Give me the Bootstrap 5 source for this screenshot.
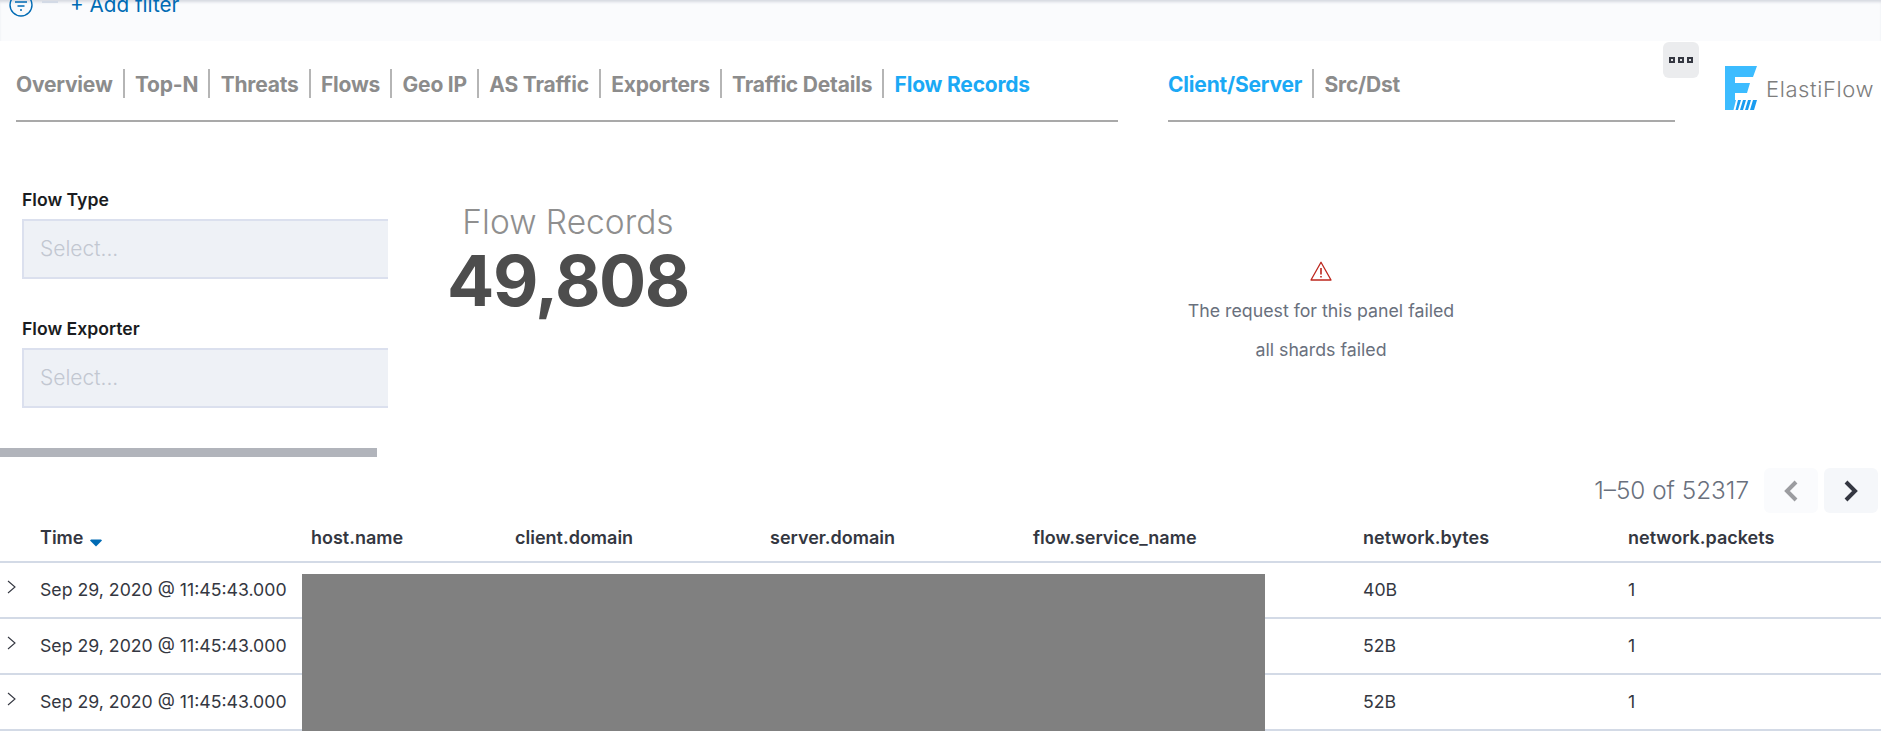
<!DOCTYPE html>
<html lang="en"><head><meta charset="utf-8"><title>Flow Records</title>
<link rel="stylesheet" href="https://cdn.jsdelivr.net/npm/bootstrap@5.3.0/dist/css/bootstrap.min.css">
<style>
body{font-family:Inter,"Liberation Sans",sans-serif;background:#fff;color:#343741;overflow:hidden;height:749px}
.filterbar{height:41px;background:#fafbfd;overflow:hidden;box-shadow:inset 0 3px 3px -1px #d5d8e0;padding-left:9px}
.filter-inner{margin-top:-7px;height:24px;gap:9px}
.filter-dash{width:16px;height:2px;background:#d3dae6;margin-top:-6px}
.filter-add{color:#006bb4;font-size:20.7px;line-height:24px;margin-left:3px}
.tabs-row{height:113px;position:relative}
.tab-group{padding-top:28px;height:81px;border-bottom:2px solid #a9a9a9}
.tab-group-a{margin-left:16px;width:1102px}
.tab-group-b{margin-left:50px;width:507px}
.tab-item{font-size:21px;font-weight:700;height:29px;line-height:31px;color:#8c8c8c;text-decoration:none;padding:0 10.2px;border-right:2px solid #b5b5b5;white-space:nowrap;letter-spacing:-.2px}
.tab-item:first-child{padding-left:0}
.tab-item:last-child{border-right:0}
.tab-item.is-on{color:#1ba9f5}
.more-btn{position:absolute;left:1663px;top:1px;width:36px;height:36px;background:#ebecee;border:0;border-radius:6px;padding:0;gap:3px}
.more-btn span{width:6px;height:6px;border:2px solid #343741;background:#e3e3e6;display:block}
.logo-wrap{position:absolute;left:1725px;top:25px;gap:9px}
.logo-text{font-size:22px;font-weight:300;color:#7d7d7d;letter-spacing:.6px;margin-top:7px}
.panels{height:294px}
.controls{width:388px;padding:36px 0 0 22px;flex:none}
.ctl-label{font-size:17.6px;font-weight:600;line-height:20px;color:#1a1c21;margin-bottom:9px}
.ctl-input{height:60px;background:#eef1f6;border:2px solid #dbe0ee;border-right:0;border-radius:0;font-size:21px;font-weight:300;color:#c2c7d1;padding:0 0 0 16px;display:flex;align-items:center;margin-bottom:40px}
.metric{width:300px;margin-left:30px;text-align:center;padding-top:49px}
.metric-title{font-size:33.5px;font-weight:300;color:#8f8f8f;line-height:38px}
.metric-value{font-size:70px;font-weight:700;color:#4d4d4d;line-height:76px;margin-top:2px;letter-spacing:-1.4px}
.err{width:300px;margin-left:453px;text-align:center;padding-top:107px;font-size:17.75px;color:#69707d}
.err p{margin:0;line-height:39px;white-space:nowrap}
.err svg{display:block;margin:0 auto 10px}
.hscroll{height:9px;width:377px;background:#b1b4bb}
.pager{height:45px;gap:6px;padding-right:3px;margin-top:11px}
.pager-text{font-size:24.3px;font-weight:300;color:#69707d;margin-right:9px}
.pg-btn{width:54px;height:45px;border:0;border-radius:6px;background:#f5f7fa;padding:0}
.pg-btn.off{background:#fafbfd}
.tbl-wrap{position:relative}
.flow-table{table-layout:fixed;width:1881px;margin:0;font-size:17.7px}
.flow-table th,.flow-table td{padding:0 0 0 8px;vertical-align:middle;border-bottom:2px solid #d3dae6;color:#343741;background:transparent;box-shadow:none;white-space:nowrap}
.flow-table th{height:49px;font-weight:600;font-size:18px}
.flow-table td{height:56px;font-weight:400}
.flow-table .chev{padding-left:7px;padding-bottom:8px}
.redact{position:absolute;left:302px;top:61px;width:963px;height:157px;background:#808080}
.sort-arrow{display:inline-block;margin-left:2px;vertical-align:-3px}
</style></head>
<body>
<div class="filterbar">
 <div class="filter-inner d-flex align-items-center">
  <svg width="24" height="24" viewBox="0 0 24 24" fill="none" stroke="#006bb4" stroke-width="1.4"><circle cx="12" cy="12" r="11"/><path d="M6 9h12M8.5 13h7M11 17h2"/></svg>
  <div class="filter-dash"></div>
  <span class="filter-add">+ Add filter</span>
 </div>
</div>
<div class="tabs-row d-flex">
 <nav class="tab-group tab-group-a d-flex align-items-start">
  <a class="tab-item" href="#">Overview</a><a class="tab-item" href="#">Top-N</a><a class="tab-item" href="#">Threats</a><a class="tab-item" href="#">Flows</a><a class="tab-item" href="#">Geo IP</a><a class="tab-item" href="#">AS Traffic</a><a class="tab-item" href="#">Exporters</a><a class="tab-item" href="#">Traffic Details</a><a class="tab-item is-on" href="#">Flow Records</a>
 </nav>
 <nav class="tab-group tab-group-b d-flex align-items-start">
  <a class="tab-item is-on" href="#">Client/Server</a><a class="tab-item" href="#">Src/Dst</a>
 </nav>
 <button class="more-btn d-flex align-items-center justify-content-center" aria-label="Options"><span></span><span></span><span></span></button>
 <div class="logo-wrap d-flex align-items-start">
  <svg width="32" height="44" viewBox="0 0 32 44"><path fill="#3cbcff" d="M0 0H32L28 11H10V17H25L22 27H10V34H0Z"/><path fill="#3cbcff" d="M0 34H11L8.5 44H0Z"/><path fill="#1a9cf0" d="M13 34H16L13 44H10.5ZM18 34H21L18 44H15ZM23 34H26L23 44H20ZM28 34H32L29 44H25Z"/></svg>
  <span class="logo-text">ElastiFlow</span>
 </div>
</div>
<div class="panels d-flex">
 <div class="controls">
  <div class="ctl-label">Flow Type</div>
  <div class="ctl-input">Select...</div>
  <div class="ctl-label">Flow Exporter</div>
  <div class="ctl-input">Select...</div>
 </div>
 <div class="metric">
  <div class="metric-title">Flow Records</div>
  <div class="metric-value">49,808</div>
 </div>
 <div class="err">
  <svg width="22" height="20" viewBox="0 0 22 20" fill="none" stroke="#bd271e" stroke-width="1.3"><path d="M11 1.2 1 19h20Z" stroke-linejoin="round"/><path d="M11 7v6.5M11 15v1.6" stroke-width="1.6"/></svg>
  <p>The request for this panel failed</p>
  <p>all shards failed</p>
 </div>
</div>
<div class="hscroll"></div>
<div class="pager d-flex justify-content-end align-items-center">
 <span class="pager-text">1–50 of 52317</span>
 <button class="pg-btn off d-flex align-items-center justify-content-center" aria-label="Previous"><svg width="16" height="22" viewBox="0 0 16 22" fill="none" stroke="#9b9ca0" stroke-width="4"><path d="M13 2 4 11l9 9"/></svg></button>
 <button class="pg-btn d-flex align-items-center justify-content-center" aria-label="Next"><svg width="16" height="22" viewBox="0 0 16 22" fill="none" stroke="#343741" stroke-width="4"><path d="m3 2 9 9-9 9"/></svg></button>
</div>
<div class="tbl-wrap">
 <table class="table flow-table">
  <colgroup><col style="width:32px"><col style="width:271px"><col style="width:204px"><col style="width:255px"><col style="width:263px"><col style="width:330px"><col style="width:265px"><col></colgroup>
  <thead><tr><th></th><th>Time <svg class="sort-arrow" width="12" height="8" viewBox="0 0 12 8"><path fill="#006bb4" d="M0 1.5 1 .5h10l1 1L6 7.5z"/></svg></th><th>host.name</th><th>client.domain</th><th>server.domain</th><th>flow.service_name</th><th>network.bytes</th><th>network.packets</th></tr></thead>
  <tbody>
  <tr><td class="chev"><svg width="10" height="14" viewBox="0 0 10 14" fill="none" stroke="#343741" stroke-width="1.1"><path d="m1 1 7 6-7 6"/></svg></td><td>Sep 29, 2020 @ 11:45:43.000</td><td></td><td></td><td></td><td></td><td>40B</td><td>1</td></tr>
  <tr><td class="chev"><svg width="10" height="14" viewBox="0 0 10 14" fill="none" stroke="#343741" stroke-width="1.1"><path d="m1 1 7 6-7 6"/></svg></td><td>Sep 29, 2020 @ 11:45:43.000</td><td></td><td></td><td></td><td></td><td>52B</td><td>1</td></tr>
  <tr><td class="chev"><svg width="10" height="14" viewBox="0 0 10 14" fill="none" stroke="#343741" stroke-width="1.1"><path d="m1 1 7 6-7 6"/></svg></td><td>Sep 29, 2020 @ 11:45:43.000</td><td></td><td></td><td></td><td></td><td>52B</td><td>1</td></tr>
  </tbody>
 </table>
 <div class="redact"></div>
</div>
<script src="https://cdn.jsdelivr.net/npm/bootstrap@5.3.0/dist/js/bootstrap.bundle.min.js"></script>
</body></html>
